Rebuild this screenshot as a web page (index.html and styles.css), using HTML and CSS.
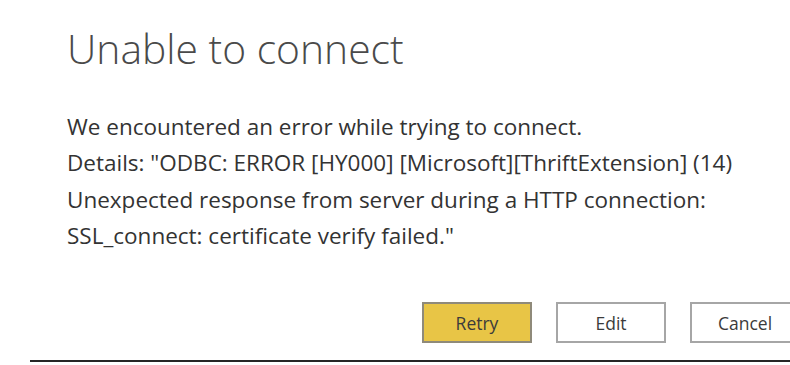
FILE: index.html
```html
<!DOCTYPE html>
<html>
<head>
<meta charset="utf-8">
<link rel="stylesheet" href="styles.css">
</head>
<body>
<div class="dialog">
  <div class="content">
    <h1 class="title">Unable to connect</h1>
    <div class="message">
      <p>We encountered an error while trying to connect.</p>
      <p>Details: "ODBC: ERROR [HY000] [Microsoft][ThriftExtension] (14)</p>
      <p>Unexpected response from server during a HTTP connection:</p>
      <p>SSL_connect: certificate verify failed."</p>
    </div>
  </div>
  <div class="actions">
    <button class="btn btn-primary">Retry</button>
    <button class="btn">Edit</button>
    <button class="btn">Cancel</button>
  </div>
  <div class="divider"></div>
</div>
</body>
</html>
```
FILE: styles.css
```css
html, body {
  margin: 0;
  padding: 0;
  background: #ffffff;
  overflow: hidden;
}
body {
  width: 790px;
  height: 365px;
  font-family: "Open Sans", "Noto Sans", sans-serif;
}
.dialog {
  width: 824px;
  display: flex;
  flex-direction: column;
}
.content {
  padding-left: 67px;
}
.title {
  margin: 0;
  padding-top: 21px;
  font-size: 40.8px;
  font-weight: 300;
  color: #4a4a4a;
  line-height: 54px;
}
.message {
  margin-top: 34px;
  font-size: 22.5px;
  color: #333333;
}
.message p {
  margin: 0;
  line-height: 36.3px;
}
.actions {
  display: flex;
  justify-content: flex-end;
  gap: 24px;
  padding-right: 24px;
  margin-top: 48px;
}
.btn {
  width: 110px;
  height: 41px;
  border: 2px solid #a6a6a6;
  background: #ffffff;
  font-family: "Open Sans", "Noto Sans", sans-serif;
  font-size: 17.5px;
  color: #3b3b3b;
  padding: 0;
}
.btn-primary {
  background: #e8c546;
  border-color: #8f8a7a;
}
.divider {
  margin-left: 30px;
  margin-top: 17px;
  height: 2px;
  background: #262626;
}
```
